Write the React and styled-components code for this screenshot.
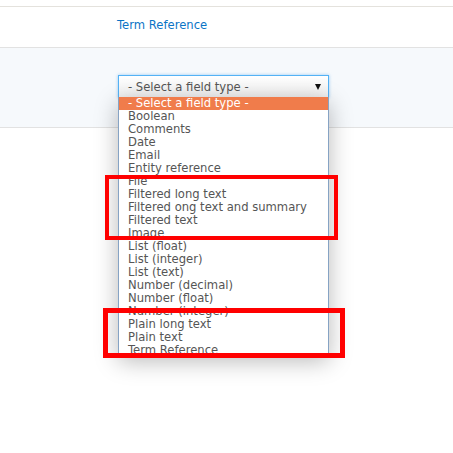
import React from 'react';
import styled, { createGlobalStyle } from 'styled-components';

const GlobalStyle = createGlobalStyle`
  html, body {
    margin: 0;
    padding: 0;
    background: #ffffff;
  }
  body {
    font-family: "DejaVu Sans", Verdana, sans-serif;
    font-size: 11.6px;
    color: #555555;
  }
`;

const Page = styled.div`
  position: relative;
  width: 453px;
  height: 453px;
  overflow: hidden;
  padding-top: 6px;
  box-sizing: border-box;
`;

const TableRow = styled.div`
  height: 42px;
  border-top: 1px solid #e4e2dd;
  border-bottom: 1px solid #e2e2e2;
  padding: 12px 0 0 117px;
  display: flex;
  align-items: flex-start;
  box-sizing: border-box;
`;

const Link = styled.a`
  color: #0a74c6;
  text-decoration: none;
  line-height: 13px;
`;

const AddRow = styled.div`
  height: 80px;
  background: #f6f9fc;
  border-bottom: 1px solid #e2e2e2;
  box-sizing: border-box;
  padding: 27px 0 0 118px;
`;

const SelectWrap = styled.div`
  position: relative;
  width: 211px;
`;

const SelectBox = styled.div`
  height: 23px;
  box-sizing: border-box;
  border: 1px solid #54b2f5;
  box-shadow: 0 0 3px rgba(84, 170, 240, 0.6);
  background: linear-gradient(#ffffff, #efefef);
  display: flex;
  align-items: center;
  justify-content: space-between;
  padding: 0 6px 0 9px;
  color: #555555;
`;

const Arrow = styled.span`
  width: 0;
  height: 0;
  border-left: 3.5px solid transparent;
  border-right: 3.5px solid transparent;
  border-top: 6px solid #111111;
  margin-right: 1px;
`;

const OptionList = styled.ul`
  position: absolute;
  top: 22px;
  left: 0;
  width: 211px;
  height: 258px;
  margin: 0;
  padding: 0;
  list-style: none;
  box-sizing: border-box;
  border: 1px solid #86a3c4;
  border-top: none;
  background: #ffffff;
  overflow: hidden;
  box-shadow: 0 6px 22px rgba(0, 0, 0, 0.28);
  z-index: 2;
`;

const Option = styled.li`
  height: 13px;
  line-height: 13px;
  padding-left: 9px;
  white-space: nowrap;
  color: ${p => (p.$active ? '#ffffff' : '#555555')};
  background: ${p => (p.$active ? '#f07c4b' : 'transparent')};
`;

const Highlight = styled.div`
  position: absolute;
  box-sizing: border-box;
  border: ${p => p.$w}px solid #ff0000;
  z-index: 3;
`;

const options = [
  '- Select a field type -',
  'Boolean',
  'Comments',
  'Date',
  'Email',
  'Entity reference',
  'File',
  'Filtered long text',
  'Filtered ong text and summary',
  'Filtered text',
  'Image',
  'List (float)',
  'List (integer)',
  'List (text)',
  'Number (decimal)',
  'Number (float)',
  'Number (integer)',
  'Plain long text',
  'Plain text',
  'Term Reference',
];

export default function App() {
  return (
    <>
      <GlobalStyle />
      <Page>
        <TableRow>
          <Link href="#">Term Reference</Link>
        </TableRow>
        <AddRow>
          <SelectWrap>
            <SelectBox>
              <span>- Select a field type -</span>
              <Arrow />
            </SelectBox>
            <OptionList>
              {options.map((o, i) => (
                <Option key={o} $active={i === 0}>{o}</Option>
              ))}
            </OptionList>
          </SelectWrap>
        </AddRow>
        <Highlight $w={4} style={{ left: 105, top: 175, width: 233, height: 65 }} />
        <Highlight $w={5} style={{ left: 103, top: 308, width: 242, height: 50 }} />
      </Page>
    </>
  );
}
